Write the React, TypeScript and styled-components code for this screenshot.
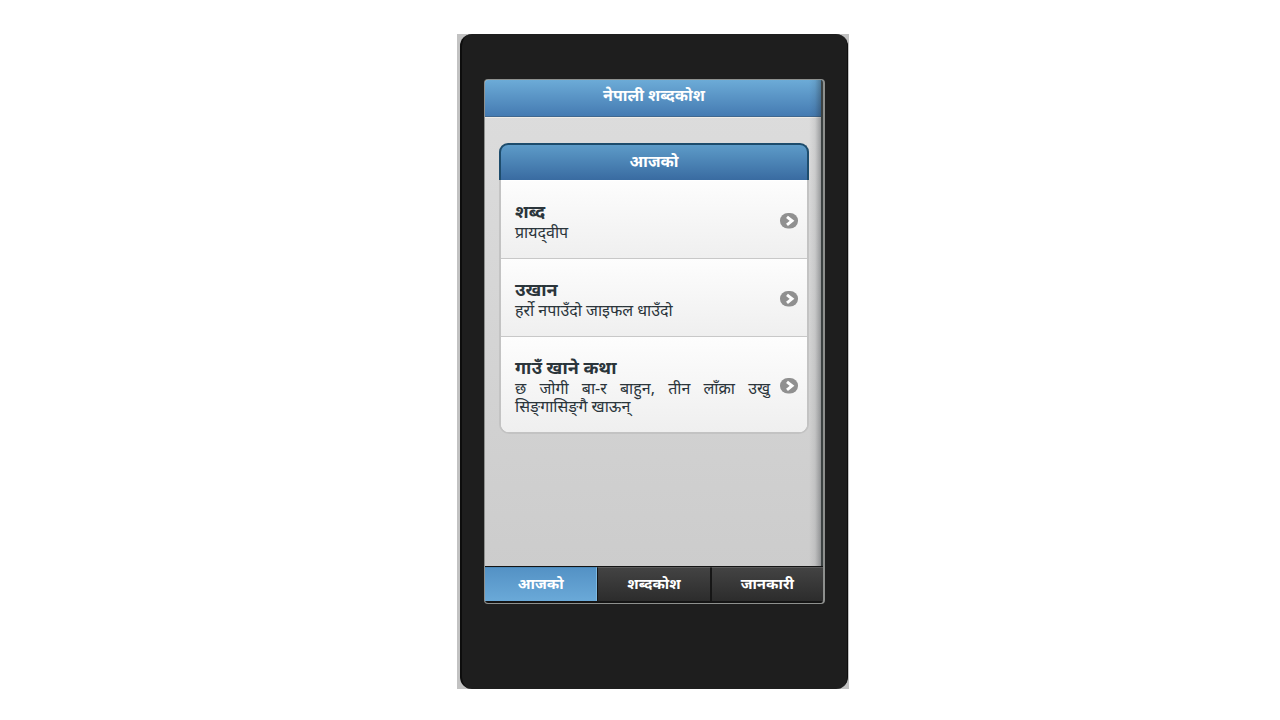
import React from "react";
import styled, { createGlobalStyle } from "styled-components";

const GlobalStyle = createGlobalStyle`
  * { box-sizing: border-box; }
  body { margin: 0; background: #fff; font-family: "Noto Sans", "Liberation Sans", sans-serif; }
`;

const Page = styled.main`
  min-height: 100vh;
  display: flex;
  justify-content: center;
  padding: 34px 0 31px 26px;
`;

const Case = styled.div`
  width: 100%;
  max-width: 392px;
  display: flex;
  background: #c2c2c2;
  padding: 0 1px 0 3px;
`;

const Bezel = styled.div`
  flex: 1;
  min-width: 0;
  display: flex;
  background: #1e1e1e;
  border: solid #0d0d0d;
  border-width: 0 1px 0 2px;
  border-radius: 12px;
  padding: 45px 22px 85px;
`;

const Screen = styled.div`
  flex: 1;
  min-width: 0;
  display: flex;
  flex-direction: column;
  border: solid #8e908e;
  border-width: 1px 2px 1px 1px;
  border-radius: 4px;
  overflow: hidden;
  background: linear-gradient(#dddddd, #cbcbcb);
  position: relative;

  &::after {
    content: "";
    position: absolute;
    inset: 0 0 37px auto;
    width: 12px;
    background: linear-gradient(to right, rgba(30, 35, 40, 0), rgba(30, 35, 40, 0.08) 50%, rgba(30, 35, 40, 0.35));
    border-right: 2px solid #3c4242;
    pointer-events: none;
  }
`;

const Header = styled.header`
  height: 37px;
  flex: none;
  padding-bottom: 6px;
  display: flex;
  align-items: center;
  justify-content: center;
  background: linear-gradient(#6cabd7, #457bb2);
  border-bottom: 1px solid #41688f;
`;

const Title = styled.h1`
  margin: 0;
  font-size: 16px;
  line-height: 20px;
  color: #fff;
`;

const Content = styled.div`
  flex: 1;
  padding: 25px 14px;
  border-top: 1px solid #f0ece6;
`;

const Card = styled.section`
  border-radius: 10px;
  border: solid #c3c3c3;
  border-width: 0 2px 2px;
  background: #fff;
`;

const CardHead = styled.h2`
  margin: 0 -2px;
  height: 37px;
  display: flex;
  align-items: center;
  justify-content: center;
  padding-bottom: 3px;
  border: solid #1d4c6c;
  border-width: 2px 2px 0;
  border-radius: 9px 9px 0 0;
  background: linear-gradient(#5d9bc8, #396ba1);
  color: #fff;
  font-size: 16px;
  line-height: 20px;
`;

const List = styled.ul`
  list-style: none;
  margin: 0;
  padding: 1px 0 0;
`;

const Item = styled.li`
  background: linear-gradient(#fdfdfd, #efefef);
  & + & { border-top: 1px solid #c8c8c8; }
  &:last-child { border-radius: 0 0 8px 8px; }
`;

const Entry = styled.a`
  display: flex;
  align-items: center;
  gap: 10px;
  padding: 19px 9px 17px 14px;
  color: #2b353b;
  text-decoration: none;
`;

const EntryText = styled.div`
  flex: 1;
  min-width: 0;
`;

const Term = styled.h3`
  margin: 0;
  font-size: 18px;
  line-height: 23px;
`;

const Meaning = styled.p`
  margin: 0;
  font-size: 16px;
  line-height: 18px;
  text-align: justify;
`;

const Arrow = styled.svg`
  flex: none;
  width: 18px;
  height: 16px;
`;

const Tabs = styled.nav`
  display: flex;
  flex: none;
  height: 37px;
  border: solid #141414;
  border-width: 1px 0 2px;
`;

const Tab = styled.button<{ $active?: boolean }>`
  flex: 1;
  padding: 0 0 4px;
  border: 0;
  border-top: 1px solid ${(p) => (p.$active ? "#4a88b8" : "#5a5a5a")};
  border-right: 1px solid ${(p) => (p.$active ? "#7db9e3" : "#161616")};
  background: ${(p) => (p.$active ? "linear-gradient(#5492c5, #6aa9d8)" : "linear-gradient(#434343, #2c2c2c)")};
  color: #fff;
  font-family: inherit;
  font-weight: 700;
  font-size: 15px;
  line-height: 20px;
  & + & { border-left: 1px solid #161616; }
  &:last-child { border-right: 0; }
`;

const entries = [
  { term: "शब्द", meaning: "प्रायद्‌वीप" },
  { term: "उखान", meaning: "हर्रो नपाउँदो जाइफल धाउँदो" },
  { term: "गाउँ खाने कथा", meaning: "छ जोगी बा-र बाहुन, तीन लाँक्रा उखु सिङ्‌गासिङ्‌गै खाऊन्" },
];

const tabs = ["आजको", "शब्दकोश", "जानकारी"];

export default function App() {
  return (
    <Page lang="ne">
      <GlobalStyle />
      <Case>
        <Bezel>
          <Screen>
            <Header>
              <Title>नेपाली शब्दकोश</Title>
            </Header>
            <Content>
              <Card>
                <CardHead>आजको</CardHead>
                <List>
                  {entries.map((e) => (
                    <Item key={e.term}>
                      <Entry href="#">
                        <EntryText>
                          <Term>{e.term}</Term>
                          <Meaning>{e.meaning}</Meaning>
                        </EntryText>
                        <Arrow viewBox="0 0 18 16" aria-hidden="true">
                          <rect width="18" height="15.5" rx="8" ry="7.5" fill="#909090" />
                          <path d="M7 3.8 L12 7.8 L7 11.8" fill="none" stroke="#fff" strokeWidth="3" />
                        </Arrow>
                      </Entry>
                    </Item>
                  ))}
                </List>
              </Card>
            </Content>
            <Tabs>
              {tabs.map((t, i) => (
                <Tab key={t} type="button" $active={i === 0}>{t}</Tab>
              ))}
            </Tabs>
          </Screen>
        </Bezel>
      </Case>
    </Page>
  );
}
